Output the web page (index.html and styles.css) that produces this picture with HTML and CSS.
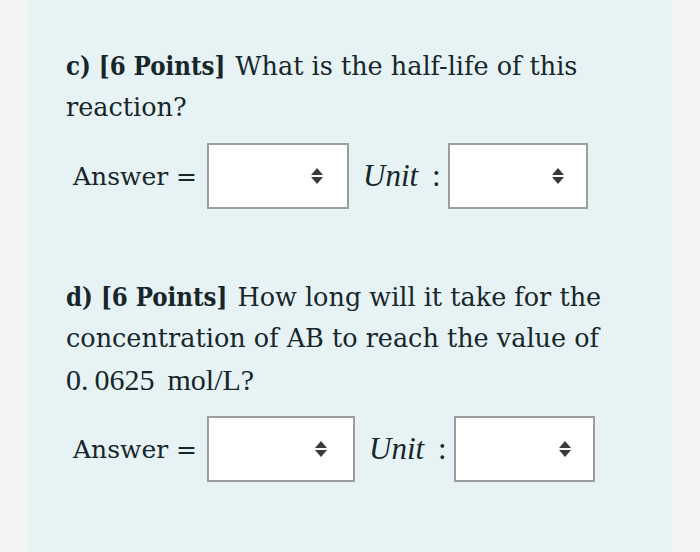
FILE: index.html
```html
<!DOCTYPE html>
<html>
<head>
<meta charset="utf-8">
<link rel="stylesheet" href="styles.css">
</head>
<body>
<div class="panel">
  <p class="question q-c"><b>c) [6 Points]</b> What is the half-life of this reaction?</p>
  <div class="answer-row row-c">
    <span class="label">Answer =</span>
    <span class="select sel-a"><span class="arrows"><i class="up"></i><i class="down"></i></span></span>
    <span class="unit"><i>Unit</i> :</span>
    <span class="select sel-u"><span class="arrows"><i class="up"></i><i class="down"></i></span></span>
  </div>
  <p class="question q-d"><b>d) [6 Points]</b> How long will it take for the concentration of AB to reach the value of <span class="math">0.<span class="sp"></span>0625<span class="sp2"></span>mol/L?</span></p>
  <div class="answer-row row-d">
    <span class="label">Answer =</span>
    <span class="select sel-a2"><span class="arrows"><i class="up"></i><i class="down"></i></span></span>
    <span class="unit"><i>Unit</i> :</span>
    <span class="select sel-u2"><span class="arrows"><i class="up"></i><i class="down"></i></span></span>
  </div>
</div>
</body>
</html>
```

FILE: styles.css
```css
html, body {
  margin: 0;
  padding: 0;
  background: #f4f4f4;
}
.panel {
  margin: 0 28px;
  height: 552px;
  box-sizing: border-box;
  background: #e7f2f4;
  padding: 46px 38px 0 38px;
  color: #16262b;
  font-family: "DejaVu Serif", serif;
}
.question {
  margin: 0;
  font-size: 25.5px;
  line-height: 41px;
  width: 545px;
}
.question b {
  font-family: "DejaVu Serif Condensed", "DejaVu Serif", serif;
  font-weight: bold;
  margin-right: 2px;
}
.math {
  font-family: "Liberation Serif", serif;
  font-size: 30px;
  white-space: nowrap;
}
.math .sp {
  display: inline-block;
  width: 6px;
}
.math .sp2 {
  display: inline-block;
  width: 13px;
}
.answer-row {
  display: flex;
  align-items: center;
  padding-left: 7px;
  height: 66px;
}
.row-c { margin-top: 15px; }
.q-d { margin-top: 68px; }
.row-d { margin-top: 14px; }
.label {
  width: 134px;
  font-size: 25px;
  white-space: nowrap;
}
.unit {
  box-sizing: border-box;
  width: 99px;
  font-family: "Liberation Serif", serif;
  font-size: 31px;
  padding-left: 14px;
  white-space: nowrap;
}
.unit i { margin-right: 6px; }
.select {
  box-sizing: border-box;
  height: 66px;
  background: #fff;
  border: 2px solid #9b9d9e;
  display: flex;
  align-items: center;
  justify-content: flex-end;
}
.sel-a { width: 142px; padding-right: 24px; }
.sel-u { width: 140px; padding-right: 22px; }
.sel-a2 { width: 148px; padding-right: 26px; }
.sel-u2 { width: 141px; padding-right: 22px; }
.arrows {
  display: flex;
  flex-direction: column;
  align-items: center;
  gap: 2px;
}
.arrows i {
  display: block;
  width: 0;
  height: 0;
  border-left: 6px solid transparent;
  border-right: 6px solid transparent;
}
.arrows .up { border-bottom: 7px solid #3a3a3a; }
.arrows .down { border-top: 7px solid #3a3a3a; }
```
